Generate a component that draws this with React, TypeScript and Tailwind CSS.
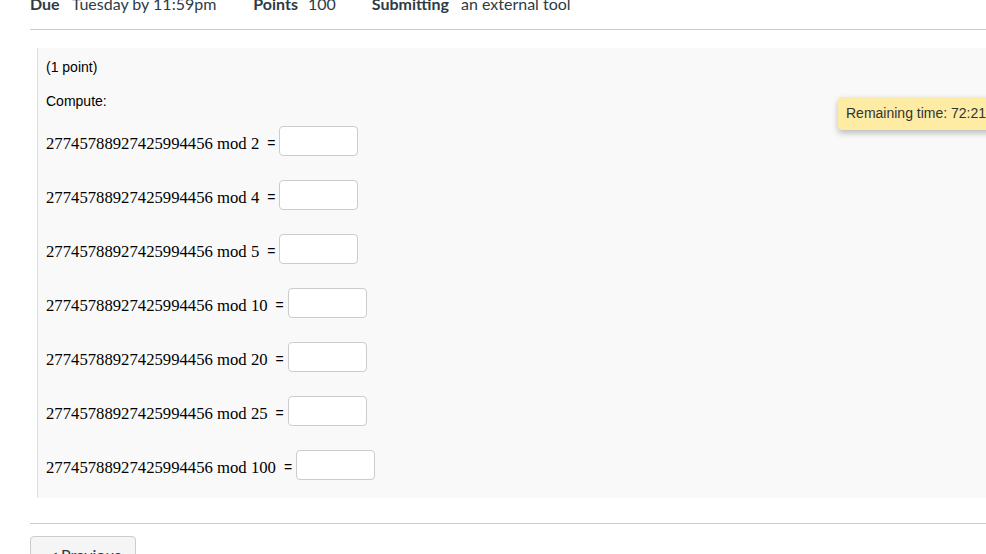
import React from 'react';

const moduli = [2, 4, 5, 10, 20, 25, 100];
const big = '27745788927425994456';

const Row: React.FC<{ m: number }> = ({ m }) => (
  <div className="flex items-center h-[30px]">
    <span className="pt-[5px] text-[16.7px] text-black [font-family:'Liberation_Serif',serif] whitespace-nowrap">
      {big} mod {m}
    </span>
    <span className="ml-[8px] pt-[5px] text-[14px] text-black [font-family:'Liberation_Sans',Arial,sans-serif]">=</span>
    <input
      type="text"
      className="ml-[4px] w-[79px] h-[30px] bg-white border border-[#cccccc] rounded-[4px] outline-none"
    />
  </div>
);

const App: React.FC = () => {
  return (
    <div className="relative w-full h-[554px] overflow-hidden bg-white text-[#2d3b45] [font-family:Lato,'Liberation_Sans',sans-serif]">
      <div className="pl-[30px]">
        <div className="-mt-[8px] pb-[13px] border-b border-[#c7cdd1] flex items-center text-[16px] leading-[24px] whitespace-nowrap">
          <span className="font-bold mr-[12px]">Due</span>
          <span className="mr-[37px]">Tuesday by 11:59pm</span>
          <span className="font-bold mr-[10px]">Points</span>
          <span className="mr-[36px]">100</span>
          <span className="font-bold mr-[12px]">Submitting</span>
          <span>an external tool</span>
        </div>

        <div className="mt-[18px] ml-[7px] border-l border-[#dddddd] bg-[#f9f9f9] pl-[8px] pt-[11px] pb-[18px]">
          <div className="text-[14px] leading-[16px] text-black [font-family:'Liberation_Sans',Arial,sans-serif]">
            <p>(1 point)</p>
            <p className="mt-[18px]">Compute:</p>
          </div>
          <div className="mt-[17px] flex flex-col gap-[24px]">
            {moduli.map((m) => (
              <Row key={m} m={m} />
            ))}
          </div>
        </div>

        <div className="mt-[25px] border-t border-[#c7cdd1]" />
        <div className="mt-[12px]">
          <button className="h-[38px] w-[106px] bg-[#f5f5f5] border border-[#c7cdd1] rounded-[4px] text-[16px] text-[#2d3b45] flex items-center pl-[18px]">
            <span className="text-[10px] mr-[4px]">◀</span>
            Previous
          </button>
        </div>
      </div>

      <div className="absolute left-[838px] top-[97px] h-[33px] pl-[8px] pr-[12px] flex items-center whitespace-nowrap rounded-[4px] bg-[#feeba4] shadow-[0_3px_6px_rgba(0,0,0,0.25)] text-[14px] text-[#333333] [font-family:'Liberation_Sans',Arial,sans-serif]">
        Remaining time: 72:21
      </div>
    </div>
  );
};

export default App;
